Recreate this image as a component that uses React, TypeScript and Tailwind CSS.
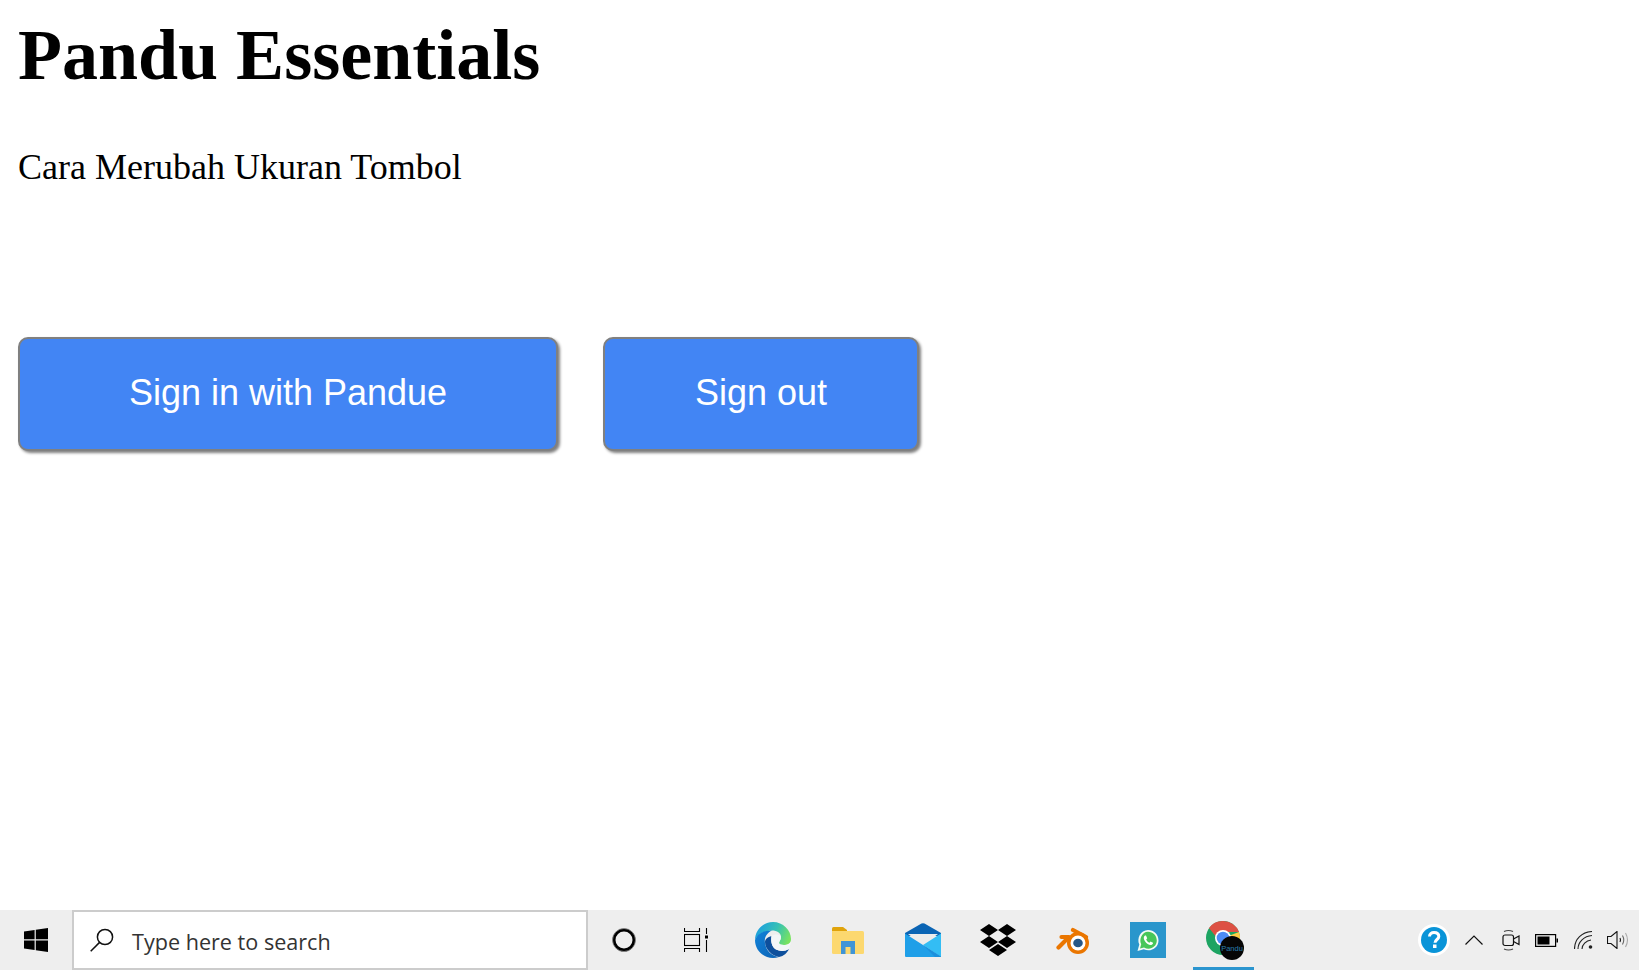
import React from 'react';

const WindowsIcon = () => (
  <svg width="24" height="24" viewBox="0 0 24 24" fill="#000">
    <path d="M0 3.4 10.6 1.9V11.3H0ZM11.8 1.7 24 0V11.3H11.8ZM0 12.6H10.6V22.1L0 20.6ZM11.8 12.6H24V24L11.8 22.3Z" />
  </svg>
);

const SearchIcon = () => (
  <svg width="24" height="24" viewBox="0 0 24 24" fill="none" stroke="#111" strokeWidth="1.5">
    <circle cx="15" cy="9" r="7.6" />
    <path d="M9.6 14.4 0.7 23.3" />
  </svg>
);

const CortanaIcon = () => (
  <svg width="24" height="24" viewBox="0 0 24 24" fill="none">
    <circle cx="12" cy="12" r="10" stroke="#000" strokeWidth="3" />
    <circle cx="12" cy="12" r="11.5" stroke="#888" strokeWidth="0.8" />
  </svg>
);

const TaskViewIcon = () => (
  <svg width="24" height="24" viewBox="0 0 24 24" fill="none" stroke="#000" strokeWidth="1.1">
    <path d="M0.5 0V3.5H15.5V0" />
    <rect x="0.5" y="6.5" width="15" height="11" />
    <path d="M0.5 24V20.5H15.5V24" />
    <path d="M22.5 0V6M22.5 12V24" />
    <rect x="21" y="7.5" width="3" height="3" fill="#000" stroke="none" />
  </svg>
);

const EdgeIcon = () => (
  <svg width="36" height="36" viewBox="0 0 36 36">
    <defs>
      <linearGradient id="edgeTop" x1="0" y1="0.3" x2="1" y2="0.6">
        <stop offset="0" stopColor="#1b9de2" />
        <stop offset="0.55" stopColor="#35c1b5" />
        <stop offset="1" stopColor="#79e35f" />
      </linearGradient>
      <linearGradient id="edgeBlue" x1="0" y1="0" x2="1" y2="1">
        <stop offset="0" stopColor="#1283da" />
        <stop offset="1" stopColor="#0c62b4" />
      </linearGradient>
    </defs>
    <path d="M18 0C28 0 36 8 36 17C36 21 33 23 29 23C26 23 24 22 24 21C24 19 26 18 26 15C26 11 22 8.5 17 8.5C9 8.5 2 13 0 18C0 8 8 0 18 0Z" fill="url(#edgeTop)" />
    <path d="M0 18C2 12 9 8 17 8.5C12 11 9 15 10 21C11 29 17 34 24 35C22 35.7 20 36 18 36C8 36 0 28 0 18Z" fill="url(#edgeBlue)" />
    <path d="M10 20C10 27 17 34 24 35C29 34 32 31 34 27C30 29.5 25 29.5 21 27.5C17 25 15.5 20 16.5 14C13 15 10 17 10 20Z" fill="#0d4f9c" />
    <path d="M16.5 14C19 11.500 26 12 26 15C26 18 24 19 24 21C24 22 26 23 29 23C32 23 35 22 36 20L34 27C30 29.5 25 29.5 21 27.5C17 25 15.5 20 16.5 14Z" fill="#f3f6f8" />
  </svg>
);

const FolderIcon = () => (
  <svg width="32" height="27" viewBox="0 0 32 27">
    <path d="M0 1.500Q0 0 1.500 0H11L15 3V5H0Z" fill="#e0a30b" />
    <path d="M0 4H30.500Q32 4 32 5.500V25.500Q32 27 30.500 27H1.500Q0 27 0 25.500Z" fill="#fcd86f" />
    <path d="M9 27V14H23V27H18.500V20H13.500V27Z" fill="#3f94d6" />
  </svg>
);

const MailIcon = () => (
  <svg width="36" height="34" viewBox="0 0 36 34">
    <path d="M0 10 16.500 0.500Q18 0 19.500 0.500L36 10V13H0Z" fill="#0a64b4" />
    <path d="M3 11H33L18 22Z" fill="#ececec" />
    <path d="M0 10.500 18 22 36 34H1Q0 34 0 33Z" fill="#1f9fe8" />
    <path d="M36 10.500V34L18 22Z" fill="#33bdf4" />
    <path d="M18 22 36 33.500V34H30Z" fill="#1b8fdc" />
  </svg>
);

const DropboxIcon = () => (
  <svg width="36" height="32" viewBox="0 0 36 32" fill="#000">
    <path d="M9 0 18 6 9 12 0 6ZM27 0 36 6 27 12 18 6ZM9 12 18 18 9 24 0 18ZM27 12 36 18 27 24 18 18ZM18 20 27 26 18 32 9 26Z" />
  </svg>
);

const BlenderIcon = () => (
  <svg width="34" height="27" viewBox="0 0 34 27">
    <path d="M2.500 20.500 13 10H5.500M17 3 30 10" stroke="#ea7600" strokeWidth="4.200" strokeLinecap="round" strokeLinejoin="round" fill="none" />
    <circle cx="22" cy="16" r="11" fill="#ea7600" />
    <circle cx="22" cy="16" r="7.500" fill="#fff" />
    <ellipse cx="22" cy="16" rx="4.800" ry="4.300" fill="#265787" />
  </svg>
);

const WhatsappIcon = () => (
  <svg width="36" height="36" viewBox="0 0 36 36">
    <rect width="36" height="36" fill="#2a96cc" />
    <path d="M7.500 29 9.300 22.500C6.500 16.500 10.500 8 18 8C24 8 28.500 12.500 28.500 18.500C28.500 26 20.500 30.500 13.800 27.300Z" fill="#f4fbf6" />
    <path d="M10 26.500 11.200 22.300C8.800 17.500 12 9.800 18 9.800C23 9.800 26.800 13.500 26.800 18.500C26.800 24.800 20 28.800 14 25.500Z" fill="#47c65a" />
    <path d="M15 13.500C13.500 14.500 13.300 16.500 14.800 19C16.500 21.700 19.500 23.500 21.300 23C22.500 22.600 23.300 21.500 23 20.800L20.500 19.500 19.500 20.700C18 20.200 16.700 18.800 16.200 17.500L17.200 16.300 16 13.500Z" fill="#fff" />
  </svg>
);

const ChromeIcon = () => (
  <svg width="38" height="39" viewBox="0 0 38 39">
    <circle cx="17" cy="17" r="17" fill="#1da462" />
    <path d="M17 0A17 17 0 0 1 33 11H17A6 6 0 0 0 11 17L3 7A17 17 0 0 1 17 0Z" fill="#dd5144" />
    <path d="M33 11A17 17 0 0 1 26 31L17 17Z" fill="#ffcd46" />
    <circle cx="17" cy="17" r="8" fill="#fff" />
    <circle cx="17" cy="17" r="6.300" fill="#4c8bf5" />
    <circle cx="26" cy="27" r="12" fill="#060606" />
    <text x="26" y="29.500" textAnchor="middle" fontSize="7.500" fill="#2a7fb0" fontFamily="'Liberation Sans', sans-serif">Pandu</text>
  </svg>
);

const HelpIcon = () => (
  <svg width="32" height="32" viewBox="0 0 32 32">
    <circle cx="16" cy="16" r="16" fill="#fff" />
    <circle cx="16" cy="16" r="13" fill="#0a94d8" />
    <path d="M11.500 12.500C11.500 10 13.500 8.500 16 8.500C18.800 8.500 20.800 10 20.800 12.500C20.800 15.500 17 15.500 17 18.800" stroke="#fff" strokeWidth="3" fill="none" />
    <rect x="15" y="20.500" width="3.500" height="3.500" fill="#fff" />
  </svg>
);

const ChevronIcon = () => (
  <svg width="18" height="10" viewBox="0 0 18 10" fill="none" stroke="#111" strokeWidth="1.200">
    <path d="M0.500 9.500 9 1 17.500 9.500" />
  </svg>
);

const MeetIcon = () => (
  <svg width="18" height="22" viewBox="0 0 18 22" fill="none" stroke="#111" strokeWidth="1.200">
    <rect x="1" y="6" width="10.500" height="10.500" rx="2" />
    <path d="M11.500 10 17 7V15.500L11.500 12.500" />
    <path d="M2 2.500Q6.500 0.500 11 2.500M2 20Q6.500 22 11 20" stroke="#444" />
  </svg>
);

const BatteryIcon = () => (
  <svg width="23" height="13" viewBox="0 0 23 13">
    <rect x="0.600" y="0.600" width="20" height="11.800" fill="none" stroke="#000" strokeWidth="1.200" />
    <rect x="2.500" y="2.500" width="12" height="8" fill="#000" />
    <rect x="21.500" y="4.500" width="1.500" height="4" fill="#000" />
  </svg>
);

const WifiIcon = () => (
  <svg width="19" height="18" viewBox="0 0 19 18" fill="none" stroke="#222" strokeWidth="1.100">
    <path d="M0.500 18C0.500 8 8 1 18 0.500" />
    <path d="M4 18C4 11 10 5 18 4.500" />
    <path d="M8 18C8 14 12 9.500 17 9" />
    <circle cx="16.500" cy="16" r="1.800" fill="#222" stroke="none" />
  </svg>
);

const VolumeIcon = () => (
  <svg width="22" height="18" viewBox="0 0 22 18" fill="none" stroke="#111" strokeWidth="1.100">
    <path d="M0.500 5.500H4L10 0.500V17.500L4 12.500H0.500Z" />
    <path d="M13 7Q14 9 13 11" />
    <path d="M15.500 4.500Q18 9 15.500 13.500" stroke="#666" />
    <path d="M18.500 2Q22.500 9 18.500 16" stroke="#aaa" />
  </svg>
);

const App: React.FC = () => {
  return (
    <div className="h-[970px] flex flex-col bg-white overflow-hidden">
      <main className="flex-1 px-[18px] font-['Liberation_Serif',serif] text-black">
        <h1 className="mt-[14px] text-[72px] leading-[83px] font-bold">Pandu Essentials</h1>
        <p className="mt-[50px] text-[36px] leading-[41px]">Cara Merubah Ukuran Tombol</p>
        <div className="mt-[149px] flex gap-[45px] font-['Liberation_Sans',sans-serif] text-[36px] text-white">
          <button className="w-[540px] h-[114px] pb-[2px] bg-[#4285f4] rounded-[10px] border-2 border-[#808080] shadow-[2px_2px_3px_#808080]">
            Sign in with Pandue
          </button>
          <button className="w-[316px] h-[114px] pb-[2px] bg-[#4285f4] rounded-[10px] border-2 border-[#808080] shadow-[2px_2px_3px_#808080]">
            Sign out
          </button>
        </div>
      </main>

      {/* Taskbar */}
      <footer className="h-[60px] flex items-center bg-[#eeeeee]">
        <div className="w-[72px] flex justify-center"><WindowsIcon /></div>
        <div className="w-[516px] h-full flex items-center bg-white border-2 border-[#cccccc] pl-[16px]">
          <SearchIcon />
          <span className="ml-[18px] pt-[4px] font-['Open_Sans',sans-serif] text-[21.6px] text-[#333]">Type here to search</span>
        </div>
        <div className="ml-[24px]"><CortanaIcon /></div>
        <div className="ml-[48px]"><TaskViewIcon /></div>
        <div className="ml-[47px]"><EdgeIcon /></div>
        <div className="ml-[41px]"><FolderIcon /></div>
        <div className="ml-[41px]"><MailIcon /></div>
        <div className="ml-[39px]"><DropboxIcon /></div>
        <div className="ml-[40px]"><BlenderIcon /></div>
        <div className="ml-[40px]"><WhatsappIcon /></div>
        <div className="ml-[40px] h-full flex items-center relative">
          <ChromeIcon />
          <div className="absolute left-[-13px] bottom-0 w-[61px] h-[3px] bg-[#2b95cf]" />
        </div>
        <div className="ml-[174px]"><HelpIcon /></div>
        <div className="ml-[15px]"><ChevronIcon /></div>
        <div className="ml-[19px]"><MeetIcon /></div>
        <div className="ml-[15px]"><BatteryIcon /></div>
        <div className="ml-[16px]"><WifiIcon /></div>
        <div className="ml-[14px]"><VolumeIcon /></div>
      </footer>
    </div>
  );
};

export default App;
